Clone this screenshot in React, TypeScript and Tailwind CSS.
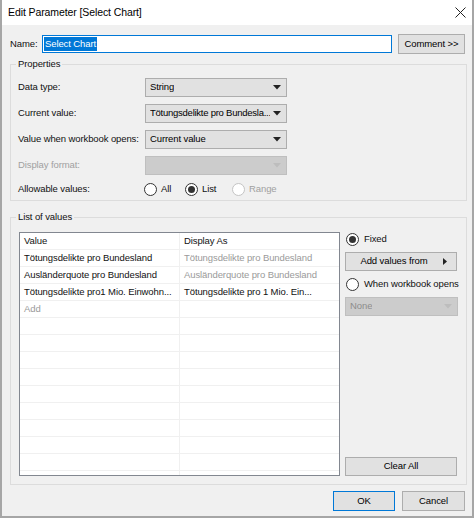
import React from "react";

const font = { fontFamily: '"Liberation Sans", Arial, sans-serif' };

function Radio({ checked, disabled }: { checked?: boolean; disabled?: boolean }) {
  return (
    <span
      className={`inline-flex items-center justify-center w-[13px] h-[13px] rounded-full border bg-white shrink-0 ${
        disabled ? "border-[#c4c4c4]" : "border-[#333333]"
      }`}
    >
      {checked && <span className="w-[7px] h-[7px] rounded-full bg-[#333333]" />}
    </span>
  );
}

function Arrow({ disabled }: { disabled?: boolean }) {
  return (
    <svg width="8" height="5" viewBox="0 0 8 5" className="shrink-0 ml-[3px]">
      <path d="M0 0 L8 0 L4 4.5 Z" fill={disabled ? "#bdbdbd" : "#222"} />
    </svg>
  );
}

function Select({ value, disabled, className = "" }: { value?: string; disabled?: boolean; className?: string }) {
  return (
    <div
      className={`h-[19px] flex items-center justify-between pl-[4px] pr-[5px] border shrink-0 ${
        disabled ? "bg-[#cccccc] border-[#bfbfbf] text-[#8d8d8d]" : "bg-[#e1e1e1] border-[#adadad] text-black"
      } ${className}`}
    >
      <span className="whitespace-nowrap overflow-hidden">{value}</span>
      <Arrow disabled={disabled} />
    </div>
  );
}

function Button({ children, className = "" }: { children: React.ReactNode; className?: string }) {
  return (
    <div className={`flex items-center justify-center bg-[#e1e1e1] border border-[#adadad] text-black shrink-0 ${className}`}>
      {children}
    </div>
  );
}

function Group({ title, className = "", children }: { title: string; className?: string; children: React.ReactNode }) {
  return (
    <div className={`relative border border-[#dcdcdc] shrink-0 ${className}`}>
      <span className="absolute -top-[8px] left-[5px] bg-[#f0f0f0] px-[2px] leading-[14px]">{title}</span>
      {children}
    </div>
  );
}

const rows = [
  { value: "Tötungsdelikte pro Bundesland", display: "Tötungsdelikte pro Bundesland", grey: true },
  { value: "Ausländerquote pro Bundesland", display: "Ausländerquote pro Bundesland", grey: true },
  { value: "Tötungsdelikte pro1 Mio. Einwohn...", display: "Tötungsdelikte pro 1 Mio. Ein...", grey: false },
];

export default function App() {
  const empty = Array.from({ length: 9 });
  return (
    <div className="w-[474px] h-[519px] bg-white" style={font}>
      <div className="w-[474px] h-[518px] flex flex-col border-l-[2px] border-r-[2px] border-b-[2px] border-[#a6a6a6] text-[9.5px] tracking-[-0.1px] text-[#111111]">
        {/* Title bar */}
        <div className="h-[25px] bg-white flex items-center justify-between pl-[6px] pr-[6px] shrink-0">
          <span className="text-[10.5px] text-black">Edit Parameter [Select Chart]</span>
          <svg width="11" height="11" viewBox="0 0 11 11">
            <path d="M0.5 0.5 L10.5 10.5 M10.5 0.5 L0.5 10.5" stroke="#222" strokeWidth="1" />
          </svg>
        </div>

        {/* Body */}
        <div className="flex-1 bg-[#f0f0f0] flex flex-col pl-[8px] pr-[6px]">
          {/* Name row */}
          <div className="flex items-center mt-[9px] h-[20px]">
            <span className="w-[32px] shrink-0">Name:</span>
            <div className="w-[350px] h-[18px] bg-white border border-[#0078d7] flex items-center pl-[1px] shrink-0">
              <span className="bg-[#0078d7] text-white px-[1px] leading-[14px]">Select Chart</span>
            </div>
            <Button className="ml-[6px] w-[67px] h-[20px]">Comment &gt;&gt;</Button>
          </div>

          {/* Properties */}
          <Group title="Properties" className="mt-[10px] h-[137px] w-[457px] pl-[7px] pt-[13px]">
            <div className="flex flex-col gap-[7px]">
              <div className="flex items-center">
                <span className="w-[127px] shrink-0 whitespace-nowrap">Data type:</span>
                <Select value="String" className="w-[142px]" />
              </div>
              <div className="flex items-center">
                <span className="w-[127px] shrink-0 whitespace-nowrap">Current value:</span>
                <Select value="Tötungsdelikte pro Bundesla..." className="w-[142px] tracking-[-0.25px]" />
              </div>
              <div className="flex items-center">
                <span className="w-[127px] shrink-0 whitespace-nowrap">Value when workbook opens:</span>
                <Select value="Current value" className="w-[142px]" />
              </div>
              <div className="flex items-center">
                <span className="w-[127px] shrink-0 whitespace-nowrap text-[#a0a0a0]">Display format:</span>
                <Select disabled className="w-[142px]" />
              </div>
              <div className="flex items-center h-[16px] -mt-[1px]">
                <span className="w-[126px] shrink-0 whitespace-nowrap">Allowable values:</span>
                <Radio />
                <span className="ml-[4px] w-[24px]">All</span>
                <Radio checked />
                <span className="ml-[4px] w-[30px]">List</span>
                <Radio disabled />
                <span className="ml-[4px] text-[#a0a0a0]">Range</span>
              </div>
            </div>
          </Group>

          {/* List of values */}
          <Group title="List of values" className="mt-[16px] h-[268px] w-[457px] pl-[8px] pt-[14px] pb-[8px] flex">
            <div className="w-[321px] h-[244px] bg-white border border-[#828790] flex flex-col overflow-hidden shrink-0">
              <div className="flex h-[17px] shrink-0 border-b border-[#f0f0f0]">
                <div className="w-[160px] pl-[4px] flex items-center border-r border-[#f0f0f0]">Value</div>
                <div className="flex-1 pl-[4px] flex items-center">Display As</div>
              </div>
              {rows.map((r) => (
                <div key={r.value} className="flex h-[17px] shrink-0 border-b border-[#f0f0f0]">
                  <div className="w-[160px] pl-[4px] flex items-center border-r border-[#f0f0f0] whitespace-nowrap overflow-hidden">{r.value}</div>
                  <div className={`flex-1 pl-[4px] flex items-center whitespace-nowrap overflow-hidden ${r.grey ? "text-[#9a9a9a]" : ""}`}>
                    {r.display}
                  </div>
                </div>
              ))}
              <div className="flex h-[17px] shrink-0 border-b border-[#f0f0f0]">
                <div className="w-[160px] pl-[4px] flex items-center border-r border-[#f0f0f0] text-[#9a9a9a]">Add</div>
                <div className="flex-1" />
              </div>
              {empty.map((_, i) => (
                <div key={i} className="flex h-[17px] shrink-0 border-b border-[#f0f0f0]">
                  <div className="w-[160px] border-r border-[#f0f0f0]" />
                  <div className="flex-1" />
                </div>
              ))}
              <div className="flex flex-1">
                <div className="w-[160px] border-r border-[#f0f0f0]" />
                <div className="flex-1" />
              </div>
            </div>

            <div className="ml-[5px] w-[113px] flex flex-col">
              <div className="flex items-center h-[14px] pl-[1px]">
                <Radio checked />
                <span className="ml-[5px]">Fixed</span>
              </div>
              <Button className="mt-[6px] h-[19px] w-[112px] relative pr-[14px]">
                <span>Add values from</span>
                <svg width="4" height="7" viewBox="0 0 4 7" className="absolute right-[9px] top-[5px]">
                  <path d="M0 0 L4 3.5 L0 7 Z" fill="#222" />
                </svg>
              </Button>
              <div className="flex items-center h-[14px] mt-[6px] pl-[1px]">
                <Radio />
                <span className="ml-[5px] whitespace-nowrap">When workbook opens</span>
              </div>
              <Select value="None" disabled className="mt-[6px] w-[113px]" />
              <div className="flex-1" />
              <Button className="h-[19px] w-[112px]">Clear All</Button>
            </div>
          </Group>

          {/* Footer */}
          <div className="flex justify-end mt-[6px] gap-[7px] pr-[1px]">
            <Button className="w-[62px] h-[20px] !border-[#0078d7]">OK</Button>
            <Button className="w-[63px] h-[20px]">Cancel</Button>
          </div>
        </div>
      </div>
    </div>
  );
}
